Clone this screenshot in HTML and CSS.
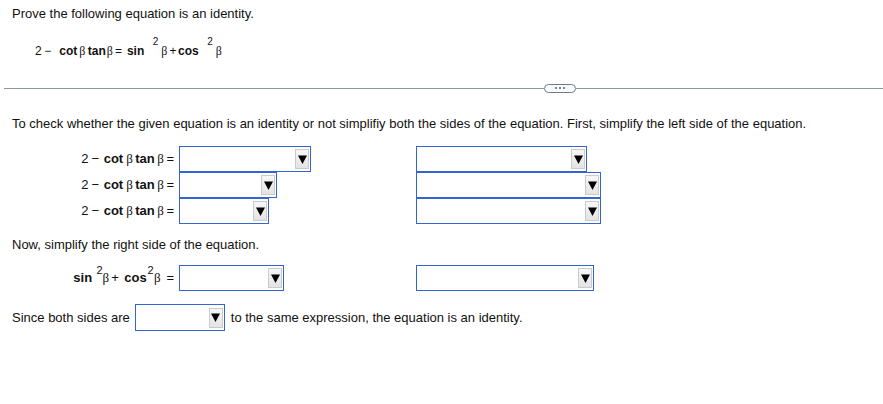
FILE: index.html
```html
<!DOCTYPE html>
<html>
<head>
<meta charset="utf-8">
<link rel="stylesheet" href="styles.css">
</head>
<body>
<div class="page">
  <p class="prompt">Prove the following equation is an identity.</p>
  <div class="given">
    <span class="g-two">2</span><span class="g-minus">−</span><b class="g-cot">cot</b><span class="beta g-b1">β</span><b class="g-tan">tan</b><span class="beta g-b2">β</span><span class="g-eq">=</span><b class="g-sin">sin</b><span class="sup g-s1">2</span><span class="beta g-b3">β</span><span class="g-plus">+</span><b class="g-cos">cos</b><span class="sup g-s2">2</span><span class="beta">β</span>
  </div>

  <div class="divider">
    <div class="rule rule-left"></div>
    <div class="pill"><span></span><span></span><span></span></div>
    <div class="rule rule-right"></div>
  </div>

  <p class="instr">To check whether the given equation is an identity or not simplifiy both the sides of the equation. First, simplify the left side of the equation.</p>

  <div class="rows">
    <div class="row">
      <div class="label"><span class="l-two">2</span><span class="l-minus">−</span><b class="l-cot">cot</b><span class="beta l-b">β</span><b class="l-tan">tan</b><span class="beta l-b">β</span><span>=</span></div>
      <div class="cell"><div class="dd w132"><div class="btn"><svg width="9" height="9" viewBox="0 0 9 9"><polygon points="0,0.5 9,0.5 4.5,9" fill="#000"/></svg></div></div></div>
      <div class="cell2"><div class="dd w171"><div class="btn"><svg width="9" height="9" viewBox="0 0 9 9"><polygon points="0,0.5 9,0.5 4.5,9" fill="#000"/></svg></div></div></div>
    </div>
    <div class="row">
      <div class="label"><span class="l-two">2</span><span class="l-minus">−</span><b class="l-cot">cot</b><span class="beta l-b">β</span><b class="l-tan">tan</b><span class="beta l-b">β</span><span>=</span></div>
      <div class="cell"><div class="dd w98"><div class="btn"><svg width="9" height="9" viewBox="0 0 9 9"><polygon points="0,0.5 9,0.5 4.5,9" fill="#000"/></svg></div></div></div>
      <div class="cell2"><div class="dd w185"><div class="btn"><svg width="9" height="9" viewBox="0 0 9 9"><polygon points="0,0.5 9,0.5 4.5,9" fill="#000"/></svg></div></div></div>
    </div>
    <div class="row">
      <div class="label"><span class="l-two">2</span><span class="l-minus">−</span><b class="l-cot">cot</b><span class="beta l-b">β</span><b class="l-tan">tan</b><span class="beta l-b">β</span><span>=</span></div>
      <div class="cell"><div class="dd w90"><div class="btn"><svg width="9" height="9" viewBox="0 0 9 9"><polygon points="0,0.5 9,0.5 4.5,9" fill="#000"/></svg></div></div></div>
      <div class="cell2"><div class="dd w185"><div class="btn"><svg width="9" height="9" viewBox="0 0 9 9"><polygon points="0,0.5 9,0.5 4.5,9" fill="#000"/></svg></div></div></div>
    </div>
  </div>

  <p class="now">Now, simplify the right side of the equation.</p>

  <div class="row row-right">
    <div class="label"><b class="r-sin">sin</b><span class="sup r-s1">2</span><span class="beta r-b1">β</span><span class="r-plus">+</span><b class="r-cos">cos</b><span class="sup r-s2">2</span><span class="beta r-b2">β</span><span>=</span></div>
    <div class="cell"><div class="dd w105"><div class="btn"><svg width="9" height="9" viewBox="0 0 9 9"><polygon points="0,0.5 9,0.5 4.5,9" fill="#000"/></svg></div></div></div>
    <div class="cell2"><div class="dd w178"><div class="btn"><svg width="9" height="9" viewBox="0 0 9 9"><polygon points="0,0.5 9,0.5 4.5,9" fill="#000"/></svg></div></div></div>
  </div>

  <div class="since">
    <span>Since both sides are</span>
    <div class="dd w90 tall"><div class="btn"><svg width="9" height="9" viewBox="0 0 9 9"><polygon points="0,0.5 9,0.5 4.5,9" fill="#000"/></svg></div></div>
    <span>to the same expression, the equation is an identity.</span>
  </div>
</div>
</body>
</html>
```
FILE: styles.css
```css
html, body {
  margin: 0;
  padding: 0;
  background: #fff;
}
body {
  font-family: "Liberation Sans", Arial, sans-serif;
  font-size: 13px;
  color: #111;
}
.page {
  padding-top: 6px;
}
.prompt {
  margin: 0 0 0 12px;
  line-height: 15px;
}
b {
  font-weight: bold;
}
.beta {
  font-family: "Liberation Serif", "Times New Roman", serif;
}
.sup {
  position: relative;
}

/* top equation */
.given {
  margin: 20px 0 0 35px;
  height: 20px;
  display: flex;
  align-items: baseline;
  line-height: 20px;
  font-size: 12px;
}
.given .beta { font-size: 12px; }
.given .sup { font-size: 10px; top: -10px; }
.g-two { margin-right: 2.5px; }
.g-minus { margin-right: 8px; }
.g-cot { margin-right: 2px; }
.g-b1 { margin-right: 2.5px; }
.g-tan { margin-right: 1px; }
.g-b2 { margin-right: 2px; }
.g-eq { margin-right: 5px; }
.g-sin { margin-right: 8.5px; }
.g-s1 { margin-right: 3px; }
.g-b3 { margin-right: 2px; }
.g-plus { margin-right: 1.5px; }
.g-cos { margin-right: 8.5px; }
.g-s2 { margin-right: 3px; }

/* divider */
.divider {
  display: flex;
  align-items: center;
  margin-top: 22px;
  height: 10px;
}
.rule {
  height: 1px;
  background: #8d95a5;
}
.rule-left {
  width: 540px;
  margin-left: 4px;
}
.rule-right {
  flex: 1;
}
.pill {
  width: 30px;
  height: 7px;
  border: 1px solid #6d7a95;
  border-radius: 5px;
  display: flex;
  align-items: center;
  justify-content: center;
  gap: 2px;
  background: #fbfcfe;
}
.pill span {
  width: 2px;
  height: 2px;
  background: #4d5a75;
  border-radius: 1px;
}

.instr {
  margin: 23px 0 0 12px;
  line-height: 15px;
}
.rows {
  margin-top: 15px;
}
.row {
  display: flex;
  height: 26px;
  align-items: center;
}
.label {
  width: 174px;
  padding-right: 5px;
  display: flex;
  justify-content: flex-end;
  align-items: baseline;
  white-space: nowrap;
}
.label .beta { font-size: 13px; }
.l-two { margin-right: 3px; }
.l-minus { margin-right: 4.5px; }
.l-cot { margin-right: 3px; }
.l-b { margin-right: 2.5px; }
.l-tan { margin-right: 2.5px; }

.label .sup { font-size: 11px; top: -8px; }
.r-sin { margin-right: 4.3px; }
.r-b1 { margin-right: 2px; }
.r-plus { margin-right: 5.6px; }
.r-cos { margin-right: 0.8px; }
.r-s2 { margin-right: 0.3px; }
.r-b2 { margin-right: 5.8px; }

.cell {
  width: 237px;
  display: flex;
}
.cell2 {
  display: flex;
}
.dd {
  box-sizing: border-box;
  height: 26px;
  border: 1px solid #3264d2;
  background: #fff;
  display: flex;
  justify-content: flex-end;
  align-items: center;
  padding: 0 1px;
}
.dd.tall {
  height: 27px;
}
.btn {
  box-sizing: border-box;
  width: 14px;
  height: 20px;
  background: linear-gradient(#f7f7f7, #e3e3e3);
  border: 1px solid #cacaca;
  display: flex;
  align-items: center;
  justify-content: center;
}
.w132 { width: 132px; }
.w98 { width: 98px; }
.w90 { width: 90px; }
.w171 { width: 171px; }
.w185 { width: 185px; }
.w105 { width: 105px; }
.w178 { width: 178px; }
.now {
  margin: 13px 0 0 12px;
  line-height: 15px;
}
.row-right {
  margin-top: 13px;
}
.since {
  margin: 13px 0 0 12px;
  display: flex;
  align-items: center;
  gap: 5px;
  height: 27px;
}
.since .dd {
  margin: 0 1px 0 0;
}
```
